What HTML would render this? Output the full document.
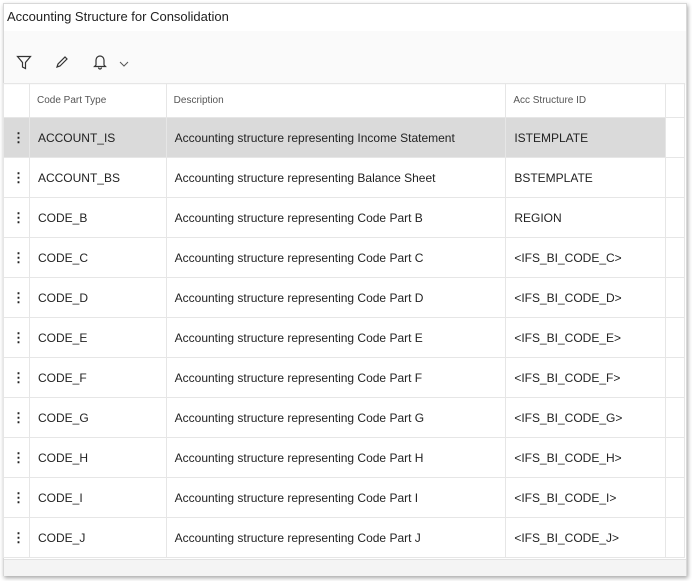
<!DOCTYPE html>
<html><head><style>
body{margin:0;width:692px;height:581px;background:#fff;font-family:"Liberation Sans",sans-serif;position:relative;overflow:hidden}
.panel{position:absolute;left:3px;top:3px;width:682px;height:571px;background:#fff;border:1px solid #d8d8d8;box-shadow:1px 2px 4px rgba(0,0,0,.35)}
.title{position:absolute;left:3px;top:5px;font-size:13px;color:#222}
.tb{position:absolute;left:0;top:27px;width:682px;height:54px;background:#fafafa}
table{position:absolute;left:-1px;top:79px;border-collapse:collapse;font-size:12px;color:#222}
td{border:1px solid #e6e6e6;height:39px;padding:0 0 0 8px;white-space:nowrap}
th{border:1px solid #e6e6e6;height:33px;font-weight:normal;font-size:10px;color:#555;text-align:left;padding:0 0 0 7px}
tr.sel td{background:#dadada}
td.d{width:17px;padding:0 0 0 8px;font-weight:bold;font-size:13px;letter-spacing:0}
.foot{position:absolute;left:0;top:555px;width:682px;height:16px;background:#f4f4f4;border-top:1px solid #e2e2e2}
</style></head><body>
<div class="panel">
<div class="title">Accounting Structure for Consolidation</div>
<div class="tb">
<svg style="position:absolute;left:12px;top:24px" width="16" height="16" viewBox="0 0 16 16" fill="none" stroke="#333" stroke-width="1.2"><path d="M1.5 1.5h13l-5 6v6l-3-1.5v-4.5z"/></svg>
<svg style="position:absolute;left:51px;top:24px" width="14" height="14" viewBox="0 0 14 14" fill="none" stroke="#333" stroke-width="1.2"><path d="M2 12l1-3 7-7 2 2-7 7z"/></svg>
<svg style="position:absolute;left:89px;top:23px" width="14" height="16" viewBox="0 0 14 16" fill="none" stroke="#333" stroke-width="1.2"><path d="M3 11V6a4 4 0 018 0v5l1.5 1.5h-11zM5.5 13.5a1.5 1.5 0 003 0"/></svg>
<svg style="position:absolute;left:115px;top:30px" width="10" height="6" viewBox="0 0 10 6" fill="none" stroke="#555" stroke-width="1"><path d="M1 1l4 4 4-4"/></svg>
</div>
<table>
<tr><th style="width:18px"></th><th style="width:129px">Code Part Type</th><th style="width:332px">Description</th><th style="width:152px">Acc Structure ID</th><th style="width:11px"></th></tr>
<tr class="sel"><td class="d">⋮</td><td>ACCOUNT_IS</td><td>Accounting structure representing Income Statement</td><td>ISTEMPLATE</td><td style="background:#fff"></td></tr>
<tr><td class="d">⋮</td><td>ACCOUNT_BS</td><td>Accounting structure representing Balance Sheet</td><td>BSTEMPLATE</td><td></td></tr>
<tr><td class="d">⋮</td><td>CODE_B</td><td>Accounting structure representing Code Part B</td><td>REGION</td><td></td></tr>
<tr><td class="d">⋮</td><td>CODE_C</td><td>Accounting structure representing Code Part C</td><td>&lt;IFS_BI_CODE_C&gt;</td><td></td></tr>
<tr><td class="d">⋮</td><td>CODE_D</td><td>Accounting structure representing Code Part D</td><td>&lt;IFS_BI_CODE_D&gt;</td><td></td></tr>
<tr><td class="d">⋮</td><td>CODE_E</td><td>Accounting structure representing Code Part E</td><td>&lt;IFS_BI_CODE_E&gt;</td><td></td></tr>
<tr><td class="d">⋮</td><td>CODE_F</td><td>Accounting structure representing Code Part F</td><td>&lt;IFS_BI_CODE_F&gt;</td><td></td></tr>
<tr><td class="d">⋮</td><td>CODE_G</td><td>Accounting structure representing Code Part G</td><td>&lt;IFS_BI_CODE_G&gt;</td><td></td></tr>
<tr><td class="d">⋮</td><td>CODE_H</td><td>Accounting structure representing Code Part H</td><td>&lt;IFS_BI_CODE_H&gt;</td><td></td></tr>
<tr><td class="d">⋮</td><td>CODE_I</td><td>Accounting structure representing Code Part I</td><td>&lt;IFS_BI_CODE_I&gt;</td><td></td></tr>
<tr><td class="d">⋮</td><td>CODE_J</td><td>Accounting structure representing Code Part J</td><td>&lt;IFS_BI_CODE_J&gt;</td><td></td></tr>
</table>
<div class="foot"></div>
</div>
</body></html>
